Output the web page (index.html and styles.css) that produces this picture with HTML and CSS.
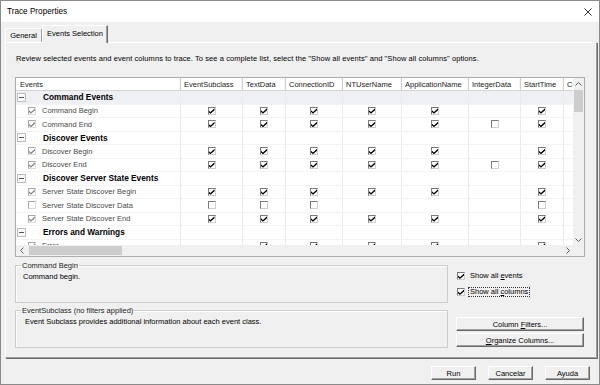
FILE: index.html
```html
<!DOCTYPE html>
<html>
<head>
<meta charset="utf-8">
<title>Trace Properties</title>
<link rel="stylesheet" href="styles.css">
</head>
<body>
<div class="window">
  <div class="titlebar">
    <span class="title">Trace Properties</span>
    <svg class="close" width="8" height="8" viewBox="0 0 8 8"><path d="M0.5 0.5 L7.5 7.5 M7.5 0.5 L0.5 7.5" stroke="#1a1a1a" stroke-width="0.9" fill="none"/></svg>
  </div>
  <div class="content">
    <div class="tabs">
      <div class="tab">General</div>
      <div class="tab active">Events Selection</div>
    </div>
    <div class="panel">
      <p class="intro">Review selected events and event columns to trace. To see a complete list, select the "Show all events" and "Show all columns" options.</p>
      <div class="grid">
        <div class="grid-top">
          <div class="table">
            <div class="row head">
              <div class="hc first">Events</div><div class="hc">EventSubclass</div><div class="hc">TextData</div><div class="hc">ConnectionID</div><div class="hc">NTUserName</div><div class="hc">ApplicationName</div><div class="hc">IntegerData</div><div class="hc">StartTime</div><div class="hc">C</div>
            </div>
            <div class="row cat sel"><div class="ev"><span class="exp"></span><b>Command Events</b></div><div></div><div></div><div></div><div></div><div></div><div></div><div></div><div></div></div>
            <div class="row"><div class="ev"><span class="cb dis on"></span><span class="nm">Command Begin</span></div><div><span class="cb on"></span></div><div><span class="cb on"></span></div><div><span class="cb on"></span></div><div><span class="cb on"></span></div><div><span class="cb on"></span></div><div></div><div><span class="cb on"></span></div><div></div></div>
            <div class="row"><div class="ev"><span class="cb dis on"></span><span class="nm">Command End</span></div><div><span class="cb on"></span></div><div><span class="cb on"></span></div><div><span class="cb on"></span></div><div><span class="cb on"></span></div><div><span class="cb on"></span></div><div><span class="cb"></span></div><div><span class="cb on"></span></div><div></div></div>
            <div class="row cat"><div class="ev"><span class="exp"></span><b>Discover Events</b></div><div></div><div></div><div></div><div></div><div></div><div></div><div></div><div></div></div>
            <div class="row"><div class="ev"><span class="cb dis on"></span><span class="nm">Discover Begin</span></div><div><span class="cb on"></span></div><div><span class="cb on"></span></div><div><span class="cb on"></span></div><div><span class="cb on"></span></div><div><span class="cb on"></span></div><div></div><div><span class="cb on"></span></div><div></div></div>
            <div class="row"><div class="ev"><span class="cb dis on"></span><span class="nm">Discover End</span></div><div><span class="cb on"></span></div><div><span class="cb on"></span></div><div><span class="cb on"></span></div><div><span class="cb on"></span></div><div><span class="cb on"></span></div><div><span class="cb"></span></div><div><span class="cb on"></span></div><div></div></div>
            <div class="row cat"><div class="ev"><span class="exp"></span><b>Discover Server State Events</b></div><div></div><div></div><div></div><div></div><div></div><div></div><div></div><div></div></div>
            <div class="row"><div class="ev"><span class="cb dis on"></span><span class="nm">Server State Discover Begin</span></div><div><span class="cb on"></span></div><div><span class="cb on"></span></div><div><span class="cb on"></span></div><div><span class="cb on"></span></div><div><span class="cb on"></span></div><div></div><div><span class="cb on"></span></div><div></div></div>
            <div class="row"><div class="ev"><span class="cb dis"></span><span class="nm">Server State Discover Data</span></div><div><span class="cb"></span></div><div><span class="cb"></span></div><div><span class="cb"></span></div><div></div><div></div><div></div><div><span class="cb"></span></div><div></div></div>
            <div class="row"><div class="ev"><span class="cb dis on"></span><span class="nm">Server State Discover End</span></div><div><span class="cb on"></span></div><div><span class="cb on"></span></div><div><span class="cb on"></span></div><div><span class="cb on"></span></div><div><span class="cb on"></span></div><div></div><div><span class="cb on"></span></div><div></div></div>
            <div class="row cat"><div class="ev"><span class="exp"></span><b>Errors and Warnings</b></div><div></div><div></div><div></div><div></div><div></div><div></div><div></div><div></div></div>
            <div class="row"><div class="ev"><span class="cb dis on"></span><span class="nm">Error</span></div><div></div><div><span class="cb on"></span></div><div><span class="cb on"></span></div><div><span class="cb on"></span></div><div><span class="cb on"></span></div><div></div><div><span class="cb on"></span></div><div></div></div>
          </div>
          <div class="vscroll">
            <div class="sarrow"><svg width="7" height="4" viewBox="0 0 7 4"><path d="M0.5 3.5 L3.5 0.5 L6.5 3.5" stroke="#606060" stroke-width="1" fill="none"/></svg></div>
            <div class="vthumb"></div>
            <div class="vspace"></div>
            <div class="sarrow"><svg width="7" height="4" viewBox="0 0 7 4"><path d="M0.5 0.5 L3.5 3.5 L6.5 0.5" stroke="#606060" stroke-width="1" fill="none"/></svg></div>
          </div>
        </div>
        <div class="hscroll">
          <div class="sarrow"><svg width="4" height="7" viewBox="0 0 4 7"><path d="M3.5 0.5 L0.5 3.5 L3.5 6.5" stroke="#606060" stroke-width="1" fill="none"/></svg></div>
          <div class="htrack"><div class="hthumb"></div></div>
          <div class="sarrow"><svg width="4" height="7" viewBox="0 0 4 7"><path d="M0.5 0.5 L3.5 3.5 L0.5 6.5" stroke="#606060" stroke-width="1" fill="none"/></svg></div>
          <div class="corner"></div>
        </div>
      </div>
      <div class="lower">
        <div class="groups">
          <fieldset class="group">
            <legend>Command Begin</legend>
            <p class="desc">Command begin.</p>
          </fieldset>
          <fieldset class="group second">
            <legend>EventSubclass (no filters applied)</legend>
            <p class="desc">Event Subclass provides additional information about each event class.</p>
          </fieldset>
        </div>
        <div class="side">
          <label class="check"><span class="cb on"></span><span class="lbl">Show all <u>e</u>vents</span></label>
          <label class="check second"><span class="cb on"></span><span class="lbl focus">Show all <u>c</u>olumns</span></label>
          <button class="btn wide first">Column <u>F</u>ilters...</button>
          <button class="btn wide"><u>O</u>rganize Columns...</button>
        </div>
      </div>
    </div>
    <div class="footer">
      <button class="btn">Run</button>
      <button class="btn">Cancelar</button>
      <button class="btn">Ayuda</button>
    </div>
  </div>
</div>
</body>
</html>
```
FILE: styles.css
```css
* { box-sizing: border-box; }
html, body { margin: 0; padding: 0; }
body {
  width: 600px;
  height: 385px;
  overflow: hidden;
  font-family: "Liberation Sans", Arial, sans-serif;
  font-size: 7.5px;
  color: #000;
  background: #fff;
}
.window {
  width: 600px;
  height: 385px;
  border: 1px solid #8a8a8a;
  background: #f0f0f0;
  display: flex;
  flex-direction: column;
}
.titlebar {
  height: 21px;
  flex: none;
  background: #fff;
  display: flex;
  align-items: center;
  justify-content: space-between;
  padding: 0 7px 0 6px;
  font-size: 8.2px;
  color: #000;
}
.close { display: block; }
.content {
  padding: 0 2px 0 4px;
}
.tabs {
  display: flex;
  align-items: flex-end;
  height: 20px;
}
.tab {
  width: 37px;
  height: 14px;
  border: 1px solid;
  border-bottom: 0;
  border-color: #fff #a0a0a0 transparent #fff;
  text-align: center;
  line-height: 13px;
}
.tab.active {
  width: 66px;
  height: 18px;
  margin-bottom: -1px;
  position: relative;
  z-index: 1;
  background: #f0f0f0;
  border-right-color: #696969;
  box-shadow: inset -1px 0 #a0a0a0;
  line-height: 15px;
}
.panel {
  height: 316px;
  border: 1px solid;
  border-color: #fff #a0a0a0 #a0a0a0 #fff;
  box-shadow: 1px 1px 0 #696969;
  padding: 11px 11px 0 9px;
}
.intro {
  margin: 0 0 0 1px;
  height: 10px;
  line-height: 10px;
  white-space: nowrap;
  letter-spacing: 0.08px;
}
.grid {
  margin-top: 13px;
  height: 180px;
  border: 1px solid #adadad;
  background: #fff;
  display: flex;
  flex-direction: column;
}
.grid-top {
  height: 167px;
  display: flex;
}
.table {
  flex: 1;
  overflow: hidden;
  min-width: 0;
}
.row {
  display: grid;
  grid-template-columns: 165px 62px 43px 57px 59px 67px 52px 43px 40px;
  height: 13.5px;
  border-bottom: 1px solid #f3f3f3;
}
.row > div {
  display: flex;
  align-items: center;
  justify-content: center;
  border-right: 1px solid #ebebeb;
  overflow: hidden;
  white-space: nowrap;
}
.row.head {
  height: 13px;
  border-bottom: 1px solid #d5d5d5;
}
.row.head > .hc {
  justify-content: flex-start;
  padding-left: 3px;
  border-right: 1px solid #cfcfcf;
  box-shadow: inset -1px 0 #f7f7f7;
  color: #1a1a1a;
}
.row.head > .hc.first { padding-left: 4px; }
.row.sel { background: #eef0f3; }
.row > .ev {
  justify-content: flex-start;
  padding-left: 12px;
  gap: 6px;
}
.row.cat > .ev {
  padding-left: 1px;
  gap: 17px;
}
.ev b {
  font-size: 8.3px;
  font-weight: bold;
}
.ev .nm { color: #4a4a4a; }
.exp {
  width: 9px;
  height: 9px;
  border: 1px solid #bdbdbd;
  background: #fbfbfb;
  display: flex;
  align-items: center;
  justify-content: center;
  flex: none;
}
.exp::before {
  content: "";
  width: 5px;
  height: 1px;
  background: #555;
}
.cb {
  width: 8px;
  height: 8px;
  flex: none;
  display: inline-block;
  position: relative;
  border: 1px solid;
  border-color: #7a7a7a #cfcfcf #cfcfcf #7a7a7a;
  background: #fff;
}
.cb.on::after {
  content: "";
  position: absolute;
  left: 0;
  top: 0;
  width: 6px;
  height: 6px;
  background: #000;
  clip-path: polygon(0 42%, 33% 72%, 100% 8%, 100% 40%, 33% 100%, 0 72%);
}
.cb.dis {
  border-color: #a8a8a8 #dcdcdc #dcdcdc #a8a8a8;
}
.cb.dis.on::after { background: #8a8a8a; }
.vscroll {
  width: 11px;
  flex: none;
  background: #f0f0f0;
  display: flex;
  flex-direction: column;
}
.sarrow {
  width: 11px;
  height: 11px;
  flex: none;
  display: flex;
  align-items: center;
  justify-content: center;
}
.sarrow svg { display: block; }
.vthumb {
  margin: 1px 1px 0 1px;
  height: 22px;
  background: #cdcdcd;
}
.vspace { flex: 1; }
.hscroll {
  height: 11px;
  display: flex;
  background: #f0f0f0;
}
.htrack {
  flex: 1;
  display: flex;
  align-items: center;
}
.hthumb {
  margin-left: 2px;
  width: 93px;
  height: 9px;
  background: #cdcdcd;
}
.corner {
  width: 11px;
  background: #f0f0f0;
}
.lower {
  margin-top: 4px;
  display: flex;
  gap: 8px;
}
.groups { width: 433px; }
.group {
  margin: 0;
  height: 42px;
  padding: 0 0 0 5px;
  border: 1px solid #cdcdcd;
  box-shadow: inset 1px 1px #fff;
  min-width: 0;
}
.group.second { margin-top: 3px; }
.group legend {
  padding: 0 1px;
  line-height: 9px;
  color: #1a1a1a;
}
.desc {
  margin: 2px 0 0 2px;
  line-height: 10px;
}
.group.second .desc { margin-left: 4px; }
.side {
  width: 128px;
  display: flex;
  flex-direction: column;
}
.check {
  margin: 10px 0 0 1px;
  height: 10px;
  display: flex;
  align-items: center;
  gap: 3px;
}
.check.second { margin-top: 6px; }
.lbl {
  padding: 0 1px;
  line-height: 8px;
  border: 1px solid transparent;
}
.lbl.focus { border: 1px dotted #333; }
.btn {
  font-family: inherit;
  font-size: 7.5px;
  color: #000;
  height: 14px;
  width: 45px;
  padding: 0;
  margin: 0;
  border: 1px solid;
  border-color: #fff #696969 #696969 #fff;
  box-shadow: inset -1px -1px #a0a0a0;
  background: #f0f0f0;
  line-height: 11px;
}
.btn.wide { width: 128px; margin-top: 2px; }
.btn.wide.first { margin-top: 20px; }
.footer {
  margin-top: 8px;
  display: flex;
  justify-content: flex-end;
  gap: 12px;
  padding-right: 7px;
}
```
